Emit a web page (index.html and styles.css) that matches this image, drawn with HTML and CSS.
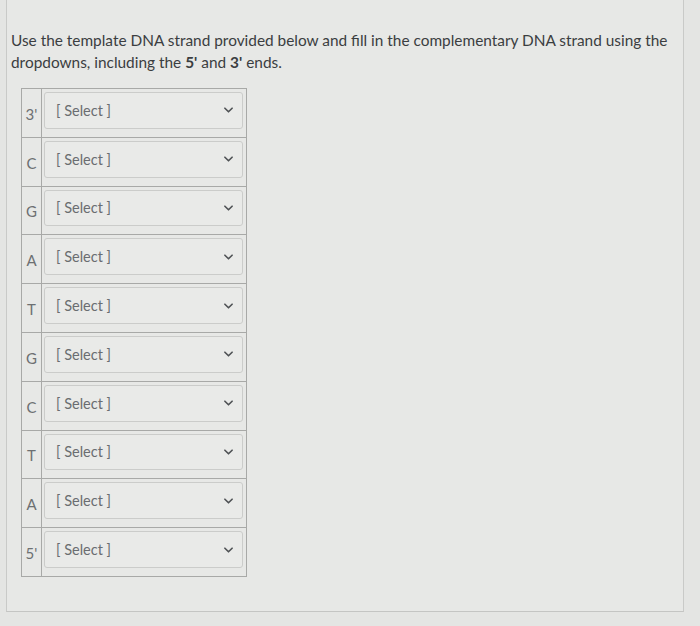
FILE: index.html
```html
<!DOCTYPE html>
<html>
<head>
<meta charset="utf-8">
<link rel="stylesheet" href="styles.css">
</head>
<body>
<div class="panel">
  <p class="prompt">Use the template DNA strand provided below and fill in the complementary DNA strand using the<br>dropdowns, including the <b>5'</b> and <b>3'</b> ends.</p>
  <div class="strand">
    <div class="row"><div class="base">3'</div><div class="cell"><div class="select"><span>[ Select ]</span><svg class="chev" viewBox="0 0 10 6"><path d="M1 1 L5 5 L9 1" /></svg></div></div></div>
    <div class="row"><div class="base">C</div><div class="cell"><div class="select"><span>[ Select ]</span><svg class="chev" viewBox="0 0 10 6"><path d="M1 1 L5 5 L9 1" /></svg></div></div></div>
    <div class="row"><div class="base">G</div><div class="cell"><div class="select"><span>[ Select ]</span><svg class="chev" viewBox="0 0 10 6"><path d="M1 1 L5 5 L9 1" /></svg></div></div></div>
    <div class="row"><div class="base">A</div><div class="cell"><div class="select"><span>[ Select ]</span><svg class="chev" viewBox="0 0 10 6"><path d="M1 1 L5 5 L9 1" /></svg></div></div></div>
    <div class="row"><div class="base">T</div><div class="cell"><div class="select"><span>[ Select ]</span><svg class="chev" viewBox="0 0 10 6"><path d="M1 1 L5 5 L9 1" /></svg></div></div></div>
    <div class="row"><div class="base">G</div><div class="cell"><div class="select"><span>[ Select ]</span><svg class="chev" viewBox="0 0 10 6"><path d="M1 1 L5 5 L9 1" /></svg></div></div></div>
    <div class="row"><div class="base">C</div><div class="cell"><div class="select"><span>[ Select ]</span><svg class="chev" viewBox="0 0 10 6"><path d="M1 1 L5 5 L9 1" /></svg></div></div></div>
    <div class="row"><div class="base">T</div><div class="cell"><div class="select"><span>[ Select ]</span><svg class="chev" viewBox="0 0 10 6"><path d="M1 1 L5 5 L9 1" /></svg></div></div></div>
    <div class="row"><div class="base">A</div><div class="cell"><div class="select"><span>[ Select ]</span><svg class="chev" viewBox="0 0 10 6"><path d="M1 1 L5 5 L9 1" /></svg></div></div></div>
    <div class="row"><div class="base">5'</div><div class="cell"><div class="select"><span>[ Select ]</span><svg class="chev" viewBox="0 0 10 6"><path d="M1 1 L5 5 L9 1" /></svg></div></div></div>
  </div>
</div>
</body>
</html>
```

FILE: styles.css
```css
html, body {
  margin: 0;
  padding: 0;
  background: #e4e5e3;
  font-family: Lato, "Open Sans", sans-serif;
  color: #3b3e41;
}
body {
  width: 700px;
  height: 626px;
  overflow: hidden;
}
.panel {
  margin: 0 16px 0 6px;
  height: 612px;
  box-sizing: border-box;
  border-left: 1px solid #c9cac8;
  border-right: 1px solid #c9cac8;
  border-bottom: 1px solid #c4c5c3;
  padding: 29px 0 0 4px;
  background: #e7e8e6;
}
.prompt {
  margin: 0;
  font-size: 15.4px;
  line-height: 22px;
  width: 670px;
}
.prompt b {
  font-weight: 700;
}
.strand {
  margin: 15px 0 0 10px;
  width: 224px;
  border: 1px solid #a8a9a7;
  display: flex;
  flex-direction: column;
}
.row {
  display: flex;
  height: 47.8px;
  border-top: 1px solid #a8a9a7;
}
.row:first-child {
  border-top: none;
}
.base {
  width: 20px;
  border-right: 1px solid #a8a9a7;
  display: flex;
  align-items: center;
  justify-content: center;
  font-size: 15px;
  color: #6d7072;
  padding-top: 2px;
  box-sizing: border-box;
}
.cell {
  flex: 1;
  padding: 3px 3px 8px 2px;
  display: flex;
}
.select {
  flex: 1;
  border: 1px solid #cbccca;
  border-radius: 3px;
  background: #e9eae8;
  display: flex;
  align-items: center;
  justify-content: space-between;
  padding: 0 9px 0 11px;
  font-size: 14.5px;
  color: #6a6d70;
}
.chev {
  width: 9px;
  height: 6px;
  fill: none;
  stroke: #4e5154;
  stroke-width: 1.8;
  stroke-linecap: round;
  stroke-linejoin: round;
}
```
